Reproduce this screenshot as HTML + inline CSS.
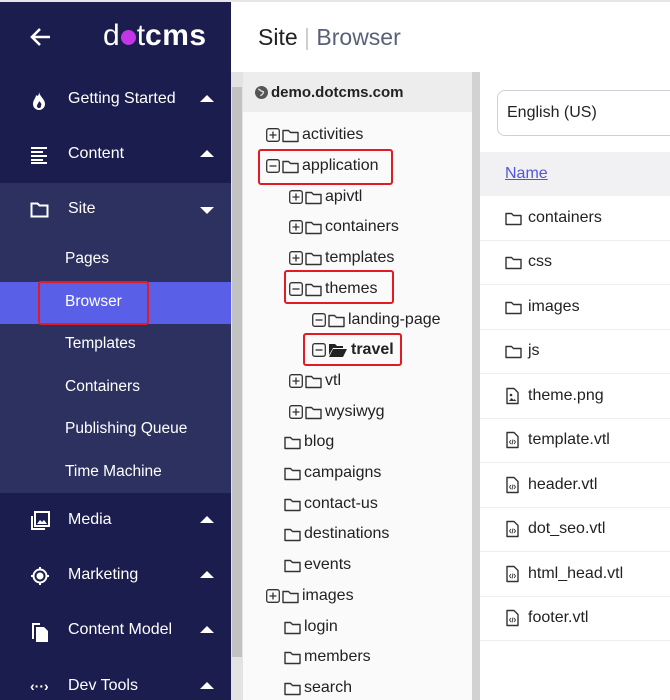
<!DOCTYPE html>
<html><head><meta charset="utf-8"><style>
*{margin:0;padding:0;box-sizing:border-box}
body{width:670px;height:698px;overflow:hidden;font-family:"Liberation Sans",Arial,sans-serif;background:#fff;position:relative;border-top:2px solid #e6e6e6}
.sb{position:absolute;left:0;top:0;width:231px;height:698px;background:#1a1d4d;color:#fff}
.sb .m{position:absolute;left:0;width:231px;font-size:16px}
.sb .m .t{position:absolute;left:68px}
.sb .m .ar{position:absolute;left:200px;width:0;height:0;border-left:7px solid transparent;border-right:7px solid transparent}
.up{border-bottom:7px solid #fff}
.dn{border-top:7px solid #fff}
.sub{position:absolute;left:65px;font-size:15.5px}
.ico{position:absolute;left:30px}
.tree{position:absolute;left:243px;top:70px;width:229px;height:628px;background:#fafafa}
.r{position:absolute;font-size:16px;color:#222;white-space:nowrap;display:flex;align-items:center;height:20px}
.r svg{margin-right:2px}
.box{position:absolute;border:2px solid #e01b24;border-radius:3px}
.row{position:absolute;left:480px;width:190px;height:44.5px;border-bottom:1px solid #eeeeef;font-size:16px;color:#222;display:flex;align-items:center;padding-left:25px}
.row svg{margin-right:5px}
</style></head><body>
<div class="sb">
 <svg class="ico" style="left:30px;top:25px" width="22" height="20" viewBox="0 0 22 20"><path d="M20 10H3M10 2L2 10l8 8" stroke="#fff" stroke-width="2.6" fill="none"/></svg>
 <div style="position:absolute;left:103px;top:17px;font-size:30px;letter-spacing:0px;color:#fff;white-space:nowrap"><span style="font-weight:300">d</span><span style="display:inline-block;width:15px;height:15px;border-radius:50%;background:#c535e8;margin:0 1px"></span><span style="font-weight:300">t</span><b style="letter-spacing:0.5px">cms</b></div>
 <div class="m" style="top:88px;height:22px"><svg class="ico" style="top:1px" width="18" height="20" viewBox="0 0 18 20"><path d="M9 1C10 6 15 8 15 13a6 6 0 0 1-12 0C3 9 6 7 6 4 8 6 9 4 9 1z" fill="#fff"/><path d="M9 10c2 2 3 3 2 5a2 2 0 0 1-4 0c0-2 2-3 2-5z" fill="#1a1d4d"/></svg><span class="t">Getting Started</span><span class="ar up" style="top:5px"></span></div>
 <div class="m" style="top:143px;height:22px"><svg class="ico" style="top:1px" width="18" height="18" viewBox="0 0 18 18" fill="#fff"><rect x="1" y="1" width="16" height="2"/><rect x="1" y="5" width="12" height="2"/><rect x="1" y="9" width="16" height="2"/><rect x="1" y="13" width="12" height="2"/><rect x="1" y="16" width="16" height="2"/></svg><span class="t">Content</span><span class="ar up" style="top:5px"></span></div>
 <div style="position:absolute;left:0;top:181px;width:231px;height:310px;background:#2d3160"></div>
 <div class="m" style="top:198px;height:22px"><svg class="ico" style="top:2px" width="19" height="16" viewBox="0 0 19 16"><path d="M1.5 1.5h6l2 2h8v11h-16z" stroke="#fff" stroke-width="2" fill="none"/></svg><span class="t">Site</span><span class="ar dn" style="top:7px"></span></div>
 <div class="sub" style="top:248px">Pages</div>
 <div style="position:absolute;left:0;top:280px;width:231px;height:42px;background:#5a5fe8"></div>
 <div class="sub" style="top:291px">Browser</div>
 <div class="box" style="left:38px;top:279px;width:111px;height:44px"></div>
 <div class="sub" style="top:333px">Templates</div>
 <div class="sub" style="top:376px">Containers</div>
 <div class="sub" style="top:418px">Publishing Queue</div>
 <div class="sub" style="top:461px">Time Machine</div>
 <div class="m" style="top:509px;height:22px"><svg class="ico" style="top:0" width="20" height="20" viewBox="0 0 20 20"><path d="M2 5v13h13" stroke="#fff" stroke-width="2" fill="none"/><rect x="5" y="1" width="14" height="14" stroke="#fff" stroke-width="2" fill="none"/><path d="M7 13l3-4 2 2 2-2 3 4z" fill="#fff"/></svg><span class="t">Media</span><span class="ar up" style="top:5px"></span></div>
 <div class="m" style="top:564px;height:22px"><svg class="ico" style="top:0" width="20" height="20" viewBox="0 0 20 20"><circle cx="10" cy="10" r="6.5" stroke="#fff" stroke-width="2" fill="none"/><circle cx="10" cy="10" r="3.5" fill="#fff"/><path d="M10 1v3M10 16v3M1 10h3M16 10h3" stroke="#fff" stroke-width="2"/></svg><span class="t">Marketing</span><span class="ar up" style="top:5px"></span></div>
 <div class="m" style="top:619px;height:22px"><svg class="ico" style="top:0" width="20" height="22" viewBox="0 0 20 22"><path d="M2 2h8v2H4v14H2z" fill="#fff"/><path d="M6 6h8l4 4v11H6z" fill="#fff"/></svg><span class="t">Content Model</span><span class="ar up" style="top:5px"></span></div>
 <div class="m" style="top:675px;height:22px"><span class="ico" style="top:1px;font-size:14px;font-weight:bold">&lsaquo;··&rsaquo;</span><span class="t">Dev Tools</span><span class="ar up" style="top:5px"></span></div>
</div>
<div style="position:absolute;left:258px;top:22px;font-size:23px;color:#222">Site <span style="color:#ccc;font-weight:300">|</span> <span style="color:#5b6079">Browser</span></div>
<div style="position:absolute;left:231px;top:70px;width:12px;height:628px;background:#e3e3e3"></div>
<div style="position:absolute;left:232px;top:85px;width:10px;height:570px;background:#c2c2c2"></div>
<div class="tree">
 <div style="position:absolute;left:0;top:0;width:229px;height:40px;background:#ededed"></div>
</div>
<div style="position:absolute;left:472px;top:70px;width:8px;height:628px;background:#d2d2d2"></div>
<div style="position:absolute;left:255px;top:82px;font-size:15px;font-weight:bold;color:#222;display:flex;align-items:center"><svg width="13" height="13" viewBox="0 0 12 12" style="margin-right:3px"><circle cx="6" cy="6" r="6" fill="#555"/><path d="M3 3c2 0 2 2 4 2s0 3-2 4" stroke="#ddd" stroke-width="1.3" fill="none"/></svg>demo.dotcms.com</div>

<svg width="0" height="0" style="position:absolute"><defs>
<g id="f"><path d="M1 3.5V14.5h15V5.5H8.5L6.5 3.5z" stroke="#333" stroke-width="1.4" fill="none" stroke-linejoin="round"/></g>
<g id="p"><rect x="0.7" y="0.7" width="12.6" height="12.6" rx="2" stroke="#333" stroke-width="1.3" fill="none"/><path d="M3.5 7h7M7 3.5v7" stroke="#333" stroke-width="1.3"/></g>
<g id="mn"><rect x="0.7" y="0.7" width="12.6" height="12.6" rx="2" stroke="#333" stroke-width="1.3" fill="none"/><path d="M3.5 7h7" stroke="#333" stroke-width="1.3"/></g>
<g id="fl"><path d="M2 1.5h7l4 4v11H2z" stroke="#333" stroke-width="1.4" fill="none" stroke-linejoin="round"/></g>
</defs></svg>

<div class="r" style="left:266px;top:123px"><svg width="14" height="14"><use href="#p"/></svg><svg width="18" height="16"><use href="#f"/></svg>activities</div>
<div class="r" style="left:266px;top:154px"><svg width="14" height="14"><use href="#mn"/></svg><svg width="18" height="16"><use href="#f"/></svg>application</div>
<div class="box" style="left:258px;top:147px;width:135px;height:36px"></div>
<div class="r" style="left:289px;top:185px"><svg width="14" height="14"><use href="#p"/></svg><svg width="18" height="16"><use href="#f"/></svg>apivtl</div>
<div class="r" style="left:289px;top:215px"><svg width="14" height="14"><use href="#p"/></svg><svg width="18" height="16"><use href="#f"/></svg>containers</div>
<div class="r" style="left:289px;top:246px"><svg width="14" height="14"><use href="#p"/></svg><svg width="18" height="16"><use href="#f"/></svg>templates</div>
<div class="r" style="left:289px;top:277px"><svg width="14" height="14"><use href="#mn"/></svg><svg width="18" height="16"><use href="#f"/></svg>themes</div>
<div class="box" style="left:284px;top:268px;width:110px;height:34px"></div>
<div class="r" style="left:312px;top:308px"><svg width="14" height="14"><use href="#mn"/></svg><svg width="18" height="16"><use href="#f"/></svg>landing-page</div>
<div class="r" style="left:312px;top:338px;font-weight:bold"><svg width="14" height="14"><use href="#mn"/></svg><svg width="20" height="16" viewBox="0 0 20 16" style="margin-right:3px"><path d="M1 2h6l2 2h6v2H5L1 13z" fill="#222"/><path d="M5 7h14l-4 8H1z" fill="#222"/></svg>travel</div>
<div class="box" style="left:303px;top:331px;width:99px;height:33px"></div>
<div class="r" style="left:289px;top:369px"><svg width="14" height="14"><use href="#p"/></svg><svg width="18" height="16"><use href="#f"/></svg>vtl</div>
<div class="r" style="left:289px;top:400px"><svg width="14" height="14"><use href="#p"/></svg><svg width="18" height="16"><use href="#f"/></svg>wysiwyg</div>
<div class="r" style="left:284px;top:430px"><svg width="18" height="16"><use href="#f"/></svg>blog</div>
<div class="r" style="left:284px;top:461px"><svg width="18" height="16"><use href="#f"/></svg>campaigns</div>
<div class="r" style="left:284px;top:492px"><svg width="18" height="16"><use href="#f"/></svg>contact-us</div>
<div class="r" style="left:284px;top:522px"><svg width="18" height="16"><use href="#f"/></svg>destinations</div>
<div class="r" style="left:284px;top:553px"><svg width="18" height="16"><use href="#f"/></svg>events</div>
<div class="r" style="left:266px;top:584px"><svg width="14" height="14"><use href="#p"/></svg><svg width="18" height="16"><use href="#f"/></svg>images</div>
<div class="r" style="left:284px;top:615px"><svg width="18" height="16"><use href="#f"/></svg>login</div>
<div class="r" style="left:284px;top:645px"><svg width="18" height="16"><use href="#f"/></svg>members</div>
<div class="r" style="left:284px;top:676px"><svg width="18" height="16"><use href="#f"/></svg>search</div>

<div style="position:absolute;left:497px;top:88px;width:190px;height:46px;border:1px solid #cfd1d8;border-radius:8px;font-size:16px;color:#222;padding:13px 0 0 9px">English (US)</div>
<div style="position:absolute;left:480px;top:150px;width:190px;height:44px;background:#f1f1f3;font-size:16px;padding:13px 0 0 25px"><span style="color:#5255e0;text-decoration:underline">Name</span></div>
<div class="row" style="top:194px"><svg width="18" height="16"><use href="#f"/></svg>containers</div>
<div class="row" style="top:238.5px"><svg width="18" height="16"><use href="#f"/></svg>css</div>
<div class="row" style="top:283px"><svg width="18" height="16"><use href="#f"/></svg>images</div>
<div class="row" style="top:327.5px"><svg width="18" height="16"><use href="#f"/></svg>js</div>
<div class="row" style="top:372px"><svg width="15" height="18" style="margin-right:8px"><use href="#fl"/><path d="M4 14l2.5-3 2 2 1-1 2 2z" fill="#333"/><circle cx="6" cy="8" r="1.3" fill="#333"/></svg>theme.png</div>
<div class="row" style="top:416.5px"><svg width="15" height="18" style="margin-right:8px"><use href="#fl"/><path d="M6 9l-1.5 2L6 13M9 9l1.5 2L9 13M8 8.5l-1 5" stroke="#333" stroke-width="0.9" fill="none"/></svg>template.vtl</div>
<div class="row" style="top:461px"><svg width="15" height="18" style="margin-right:8px"><use href="#fl"/><path d="M6 9l-1.5 2L6 13M9 9l1.5 2L9 13M8 8.5l-1 5" stroke="#333" stroke-width="0.9" fill="none"/></svg>header.vtl</div>
<div class="row" style="top:505.5px"><svg width="15" height="18" style="margin-right:8px"><use href="#fl"/><path d="M6 9l-1.5 2L6 13M9 9l1.5 2L9 13M8 8.5l-1 5" stroke="#333" stroke-width="0.9" fill="none"/></svg>dot_seo.vtl</div>
<div class="row" style="top:550px"><svg width="15" height="18" style="margin-right:8px"><use href="#fl"/><path d="M6 9l-1.5 2L6 13M9 9l1.5 2L9 13M8 8.5l-1 5" stroke="#333" stroke-width="0.9" fill="none"/></svg>html_head.vtl</div>
<div class="row" style="top:594.5px"><svg width="15" height="18" style="margin-right:8px"><use href="#fl"/><path d="M6 9l-1.5 2L6 13M9 9l1.5 2L9 13M8 8.5l-1 5" stroke="#333" stroke-width="0.9" fill="none"/></svg>footer.vtl</div>
</body></html>
